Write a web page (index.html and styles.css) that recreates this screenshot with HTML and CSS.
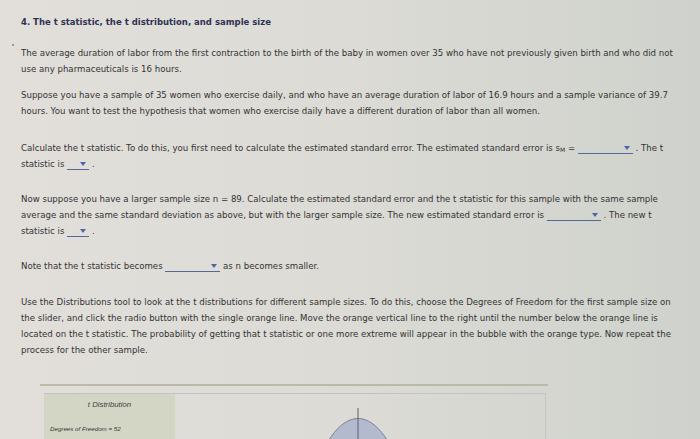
FILE: index.html
```html
<!DOCTYPE html>
<html>
<head>
<meta charset="utf-8">
<link rel="stylesheet" href="styles.css">
</head>
<body>
<div class="page">
  <h1 class="title">4. The t statistic, the t distribution, and sample size</h1>
  <span class="dot"></span>
  <p class="p p1">The average duration of labor from the first contraction to the birth of the baby in women over 35 who have not previously given birth and who did not<br>use any pharmaceuticals is 16 hours.</p>
  <p class="p p2">Suppose you have a sample of 35 women who exercise daily, and who have an average duration of labor of 16.9 hours and a sample variance of 39.7<br>hours. You want to test the hypothesis that women who exercise daily have a different duration of labor than all women.</p>
  <p class="p p3">Calculate the t statistic. To do this, you first need to calculate the estimated standard error. The estimated standard error is s<sub>M</sub> = <span class="dd w55"><span class="tri"></span></span> . The t<br>statistic is <span class="dd w22"><span class="tri"></span></span> .</p>
  <p class="p p4">Now suppose you have a larger sample size n = 89. Calculate the estimated standard error and the t statistic for this sample with the same sample<br>average and the same standard deviation as above, but with the larger sample size. The new estimated standard error is <span class="dd w54"><span class="tri"></span></span> . The new t<br>statistic is <span class="dd w22"><span class="tri"></span></span> .</p>
  <p class="p p5">Note that the t statistic becomes <span class="dd w55"><span class="tri"></span></span> as n becomes smaller.</p>
  <p class="p p6">Use the Distributions tool to look at the t distributions for different sample sizes. To do this, choose the Degrees of Freedom for the first sample size on<br>the slider, and click the radio button with the single orange line. Move the orange vertical line to the right until the number below the orange line is<br>located on the t statistic. The probability of getting that t statistic or one more extreme will appear in the bubble with the orange type. Now repeat the<br>process for the other sample.</p>
  <div class="rule"></div>
  <div class="tool">
    <div class="side">
      <div class="side-title">t Distribution</div>
      <div class="dof">Degrees of Freedom = 52</div>
    </div>
    <div class="plot">
      <svg class="curve" width="368" height="48" viewBox="0 0 368 48">
        <path d="M138 80 C 164 6, 202 6, 228 80 Z" fill="#b4bacd" stroke="#7c8499" stroke-width="1"/>
        <line x1="183" y1="14" x2="183" y2="48" stroke="#5c6070" stroke-width="1"/>
      </svg>
    </div>
  </div>
</div>
</body>
</html>
```
FILE: styles.css
```css
html, body {
  margin: 0;
  padding: 0;
}
body {
  width: 700px;
  height: 439px;
  overflow: hidden;
  background: linear-gradient(to right, #e2dfdb 0%, #dcdbd6 50%, #cfd2cc 100%);
  font-family: "DejaVu Sans", Verdana, sans-serif;
  color: #333333;
}
.page {
  position: relative;
  padding: 14px 0 0 21px;
}
.title {
  margin: 0;
  font-size: 8.5px;
  line-height: 16px;
  font-weight: bold;
  color: #2f3352;
}
.dot {
  position: absolute;
  left: 12px;
  top: 44px;
  width: 2px;
  height: 2px;
  background: #9a9a9a;
}
.p {
  margin: 0;
  font-size: 8.6px;
  line-height: 16px;
  white-space: nowrap;
}
.p1 { margin-top: 15px; }
.p2 { margin-top: 10px; }
.p3 { margin-top: 21px; }
.p4 { margin-top: 19px; }
.p5 { margin-top: 19px; }
.p6 { margin-top: 20px; }
sub {
  font-size: 6px;
  vertical-align: -1px;
  line-height: 0;
}
.dd {
  display: inline-block;
  position: relative;
  height: 10px;
  border-bottom: 1px solid #56679a;
  vertical-align: -3px;
}
.w22 { width: 22px; }
.w54 { width: 54px; }
.w55 { width: 55px; }
.tri {
  position: absolute;
  right: 3px;
  top: 3px;
  width: 0;
  height: 0;
  border-left: 3.5px solid transparent;
  border-right: 3.5px solid transparent;
  border-top: 4px solid #4c67a8;
}
.rule {
  margin: 26px 0 0 19px;
  width: 508px;
  height: 2px;
  background: #bcb9a6;
}
.tool {
  display: flex;
  margin: 7px 0 0 23px;
  width: 501px;
  height: 60px;
  border-top: 1px solid #c3c3c0;
  border-right: 1px solid #c3c3c0;
}
.side {
  width: 131px;
  background: #d3d6c5;
  display: flex;
  flex-direction: column;
}
.side-title {
  margin-top: 6px;
  text-align: center;
  font-family: "Liberation Sans", Arial, sans-serif;
  font-style: italic;
  font-size: 7.8px;
  color: #444;
}
.dof {
  margin: 16px 0 0 6px;
  font-family: "Liberation Sans", Arial, sans-serif;
  font-style: italic;
  font-size: 6.2px;
  color: #333;
}
.plot {
  flex: 1;
  overflow: hidden;
}
.curve {
  display: block;
}
```
